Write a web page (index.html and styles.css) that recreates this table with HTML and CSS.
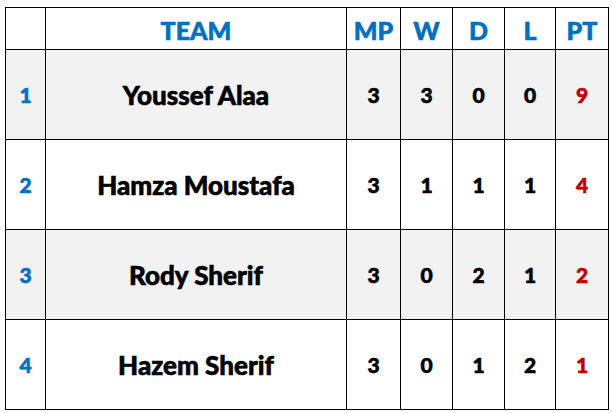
FILE: index.html
```html
<!DOCTYPE html>
<html>
<head>
<meta charset="utf-8">
<link rel="stylesheet" href="styles.css">
</head>
<body>
<table class="standings">
  <colgroup>
    <col class="c-rank"><col class="c-team"><col class="c-mp"><col class="c-w"><col class="c-d"><col class="c-l"><col class="c-pt">
  </colgroup>
  <thead>
    <tr class="head">
      <th></th><th>TEAM</th><th>MP</th><th>W</th><th>D</th><th>L</th><th>PT</th>
    </tr>
  </thead>
  <tbody>
    <tr class="shade">
      <td class="rank">1</td><td class="team">Youssef Alaa</td><td class="num">3</td><td class="num">3</td><td class="num">0</td><td class="num">0</td><td class="pts">9</td>
    </tr>
    <tr>
      <td class="rank">2</td><td class="team">Hamza Moustafa</td><td class="num">3</td><td class="num">1</td><td class="num">1</td><td class="num">1</td><td class="pts">4</td>
    </tr>
    <tr class="shade">
      <td class="rank">3</td><td class="team">Rody Sherif</td><td class="num">3</td><td class="num">0</td><td class="num">2</td><td class="num">1</td><td class="pts">2</td>
    </tr>
    <tr>
      <td class="rank">4</td><td class="team">Hazem Sherif</td><td class="num">3</td><td class="num">0</td><td class="num">1</td><td class="num">2</td><td class="pts">1</td>
    </tr>
  </tbody>
</table>
</body>
</html>
```

FILE: styles.css
```css
html, body {
  margin: 0;
  background: #ffffff;
}
body {
  padding: 7px 0 0 5px;
  font-family: "Lato", "Open Sans", sans-serif;
}
.standings {
  border-collapse: collapse;
  table-layout: fixed;
  width: 603px;
}
.c-rank { width: 40px; }
.c-team { width: 301px; }
.c-mp { width: 54px; }
.c-w { width: 52px; }
.c-d { width: 52px; }
.c-l { width: 51px; }
.c-pt { width: 53px; }
.standings th,
.standings td {
  border: 1px solid #000;
  padding: 0;
  text-align: center;
  vertical-align: middle;
  font-weight: 900;
  -webkit-text-stroke: 0.6px currentColor;
}
.head th {
  height: 39px;
  color: #0070c0;
  font-size: 25px;
  padding-top: 2px;
}
tbody td {
  height: 89px;
  padding-top: 3px;
}
.shade td {
  background: #f2f2f2;
}
.rank {
  color: #0070c0;
  font-size: 21px;
}
.team {
  color: #000;
  font-size: 26px;
}
.num {
  color: #000;
  font-size: 21px;
}
.pts {
  color: #c00000;
  font-size: 21px;
}
```
